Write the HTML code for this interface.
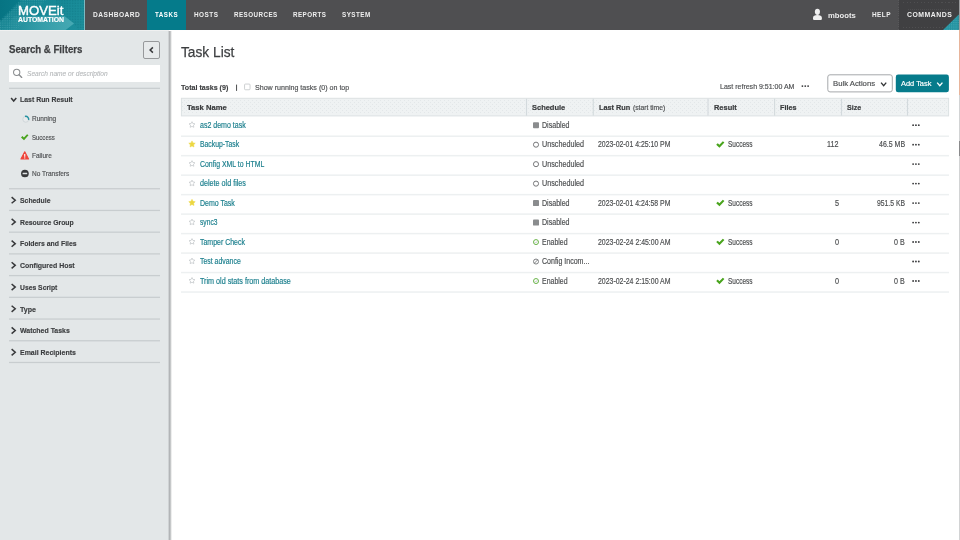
<!DOCTYPE html>
<html><head><meta charset="utf-8"><title>Task List - MOVEit Automation</title>
<style>
html,body{margin:0;padding:0;}
body{width:960px;height:540px;overflow:hidden;position:relative;background:#fff;font-family:"Liberation Sans",sans-serif;}
.t{position:absolute;white-space:nowrap;line-height:1;display:block;transform-origin:0 50%;}
.abs,.sep,.sdiv,.cdiv{position:absolute;}
#hdr{left:0;top:0;width:960px;height:30px;background:#4f4f51;}
#logo{left:0;top:0;width:84px;height:30px;background:linear-gradient(90deg,#067483 0%,#0b7f8e 40%,#178c99 100%);overflow:hidden;}
#tab{left:146.8px;top:0;width:39.2px;height:30px;background:#057b8b;}
#cmd{left:898.6px;top:0;width:61.4px;height:30px;background:#404042;}
#side{left:0;top:30px;width:169px;height:510px;background:#e3e7e8;}
#sideb{left:0;top:0;width:0;height:0;}
#sidesh{left:168.4px;top:30.6px;width:3.6px;height:510px;background:linear-gradient(90deg,#e3e7e8 0%,#b3b6b8 30%,#b0b3b5 50%,#dcdddd 75%,#ffffff 100%);}
#colbtn{left:143px;top:41px;width:15px;height:15.8px;border:1px solid #97999b;border-radius:2px;background:#e7eaeb;}
#srch{left:8.9px;top:64.7px;width:151.1px;height:17.8px;background:#fff;}
.sdiv{left:9px;width:151px;height:1.3px;background:#c3c8ca;}
#thead{left:180.9px;top:97.8px;width:768.2px;height:18.6px;background:#eef1f2;box-sizing:border-box;border:1px solid #d6dde0;}
.cdiv{top:98.6px;width:1px;height:17px;background:#d6dde0;}
.sep{left:181px;width:768px;height:1px;background:#e5eaec;}
#bulk{left:827.3px;top:74.4px;width:65.5px;height:18px;box-sizing:border-box;border:1px solid #a4a7a9;border-radius:2.5px;background:#fff;}
#add{left:895.8px;top:74.5px;width:53.1px;height:17.8px;border-radius:2.5px;background:#067b8b;}

</style></head><body>
<div id="hdr" class="abs"></div>
<div id="logo" class="abs">
<svg width="85" height="30" viewBox="0 0 85 30" style="position:absolute;left:0;top:0">
<defs>
<linearGradient id="lg1" x1="0" y1="0" x2="1" y2="0"><stop offset="0" stop-color="#3fa4af" stop-opacity="0"/><stop offset="0.55" stop-color="#3fa4af" stop-opacity="0.75"/><stop offset="1" stop-color="#46a9b3" stop-opacity="1"/></linearGradient>
<linearGradient id="lg2" x1="0" y1="1" x2="1" y2="0"><stop offset="0" stop-color="#2a96a2" stop-opacity="0.55"/><stop offset="1" stop-color="#2a96a2" stop-opacity="0.15"/></linearGradient>
<pattern id="ldots" width="1.8" height="1.8" patternUnits="userSpaceOnUse"><rect x="0" y="0" width="0.9" height="0.9" fill="#5fb3bd" opacity="0.4"/></pattern>
<pattern id="dots" width="1.6" height="1.6" patternUnits="userSpaceOnUse"><rect x="0" y="0" width="0.8" height="0.8" fill="#0a6f7d" opacity="0.45"/></pattern>
</defs>
<polygon points="0,30 0,22 22,0 60,0 85,0 85,30" fill="url(#lg2)"/>
<polygon points="56,0 85,0 85,30 78,30 74,23.4 64.7,16.3 56,8" fill="url(#dots)"/>
<polygon points="0,30 0,20 20,0 46,0 16,30" fill="url(#ldots)"/>
<polygon points="14,16.3 64.7,16.3 74,23.4 65.6,30 2,30" fill="url(#lg1)"/>
</svg></div>
<div class="abs" style="left:84px;top:0;width:1.2px;height:30px;background:#7ab9c1"></div>
<div id="tab" class="abs"></div>
<div id="cmd" class="abs"></div>
<div class="abs" style="left:897.6px;top:0;width:1px;height:30px;background:repeating-linear-gradient(180deg,#58585a 0 1px,#4a4a4c 1px 2.2px)"></div>
<div class="abs" style="left:903px;top:2px;width:53px;height:1px;background:repeating-linear-gradient(90deg,#4f4f51 0 1px,rgba(0,0,0,0) 1px 3.5px)"></div>
<div class="abs" style="left:903px;top:27px;width:42px;height:1px;background:repeating-linear-gradient(90deg,#4f4f51 0 1px,rgba(0,0,0,0) 1px 3px)"></div>
<div class="abs" style="left:908px;top:9px;width:43px;height:1px;background:repeating-linear-gradient(90deg,#4d4d4f 0 1px,rgba(0,0,0,0) 1px 2px)"></div>
<svg class="abs" style="left:942px;top:13px" width="18" height="17" viewBox="0 0 18 17"><defs><pattern id="dots2" width="1.8" height="1.8" patternUnits="userSpaceOnUse"><rect x="0" y="0" width="0.9" height="0.9" fill="#5fb6c0" opacity="0.55"/></pattern></defs><polygon points="1,17 16.8,1.4 16.8,17" fill="#2393a1"/><polygon points="1,17 16.8,1.4 16.8,17" fill="url(#dots2)"/></svg>
<div id="side" class="abs"></div>
<div class="abs" style="left:0;top:30px;width:169px;height:1px;background:#f0f1f1"></div>
<div id="sideb" class="abs"></div><div id="sidesh" class="abs"></div>
<div id="colbtn" class="abs"></div><div id="srch" class="abs"></div>
<svg class="abs" style="left:0;top:0" width="960" height="540" viewBox="0 0 960 540">
<rect x="9" y="87.7" width="151" height="1.25" fill="#c8cdcf"/>
<rect x="9" y="188.10" width="151" height="1.25" fill="#c8cdcf"/>
<rect x="9" y="209.82" width="151" height="1.25" fill="#c8cdcf"/>
<rect x="9" y="231.54" width="151" height="1.25" fill="#c8cdcf"/>
<rect x="9" y="253.26" width="151" height="1.25" fill="#c8cdcf"/>
<rect x="9" y="274.98" width="151" height="1.25" fill="#c8cdcf"/>
<rect x="9" y="296.70" width="151" height="1.25" fill="#c8cdcf"/>
<rect x="9" y="318.42" width="151" height="1.25" fill="#c8cdcf"/>
<rect x="9" y="340.14" width="151" height="1.25" fill="#c8cdcf"/>
<rect x="9" y="361.86" width="151" height="1.25" fill="#c8cdcf"/>
<rect x="181" y="135.45" width="768" height="1.5" fill="#edf0f1"/>
<rect x="181" y="154.93" width="768" height="1.5" fill="#edf0f1"/>
<rect x="181" y="174.41" width="768" height="1.5" fill="#edf0f1"/>
<rect x="181" y="193.89" width="768" height="1.5" fill="#edf0f1"/>
<rect x="181" y="213.37" width="768" height="1.5" fill="#edf0f1"/>
<rect x="181" y="232.85" width="768" height="1.5" fill="#edf0f1"/>
<rect x="181" y="252.33" width="768" height="1.5" fill="#edf0f1"/>
<rect x="181" y="271.81" width="768" height="1.5" fill="#edf0f1"/>
<rect x="181" y="291.29" width="768" height="1.5" fill="#edf0f1"/>
<defs><pattern id="hp" width="4" height="4" patternUnits="userSpaceOnUse"><rect x="0" y="0" width="1" height="1" fill="#e3e7e9"/><rect x="2" y="2" width="1" height="1" fill="#e3e7e9"/></pattern></defs>
<rect x="181.4" y="98.3" width="767.2" height="17.6" fill="#eff2f3" stroke="#dce1e3" stroke-width="1"/>
<rect x="182" y="100" width="766" height="14" fill="url(#hp)"/>
<rect x="525.95" y="98.7" width="1.1" height="16.9" fill="#d3dadd"/>
<rect x="592.70" y="98.7" width="1.1" height="16.9" fill="#d3dadd"/>
<rect x="707.45" y="98.7" width="1.1" height="16.9" fill="#d3dadd"/>
<rect x="774.05" y="98.7" width="1.1" height="16.9" fill="#d3dadd"/>
<rect x="840.95" y="98.7" width="1.1" height="16.9" fill="#d3dadd"/>
<rect x="906.95" y="98.7" width="1.1" height="16.9" fill="#d3dadd"/>
<ellipse cx="817.4" cy="11.8" rx="2.55" ry="3.1" fill="#efefef"/>
<path d="M813.8 19.9c-0.600 0-0.800-0.300-0.800-0.800v-1.300c0-1.900 1.700-2.700 4.400-2.700s4.500 0.800 4.500 2.700v1.300c0 0.500-0.200 0.800-0.800 0.800z" fill="#efefef"/>
<path d="M152.88 47.42L150.15 50.00L152.88 52.58" fill="none" stroke="#38393b" stroke-width="1.5"/>
<circle cx="16.7" cy="72.3" r="3.15" fill="none" stroke="#8a8d8f" stroke-width="1.05"/><path d="M19.1 74.800L21.700 77.400" stroke="#8a8d8f" stroke-width="1.35" stroke-linecap="round"/>
<path d="M11.12 98.03L13.70 101.05L16.28 98.03" fill="none" stroke="#38393b" stroke-width="1.5"/>
<circle cx="25.75" cy="119.3" r="2.95" fill="#e7eaeb" stroke="#d0d7da" stroke-width="1.0"/>
<path d="M24.99 116.45A2.95 2.95 0 0 1 28.60 120.06" fill="none" stroke="#2391a0" stroke-width="1.45"/>
<polygon points="21.00,137.43 22.43,136.03 23.93,137.56 27.07,134.20 28.50,135.36 24.00,140.30" fill="#49a41d"/>
<path d="M24.75 151.700L28.550 159.000H20.950z" fill="#ee453a" stroke="#ee453a" stroke-width="1.100" stroke-linejoin="round"/>
<rect x="24.2" y="154.000" width="1.1" height="2.800" fill="#fff"/><rect x="24.2" y="157.400" width="1.1" height="1.100" fill="#fff"/>
<circle cx="24.9" cy="173.5" r="3.85" fill="#38393b"/><rect x="22.600" y="172.700" width="4.600" height="1.600" rx="0.4" fill="#dfe3e4"/>
<path d="M11.62 197.12L15.25 200.20L11.62 203.27" fill="none" stroke="#38393b" stroke-width="1.5"/>
<path d="M11.62 218.84L15.25 221.92L11.62 224.99" fill="none" stroke="#38393b" stroke-width="1.5"/>
<path d="M11.62 240.56L15.25 243.64L11.62 246.71" fill="none" stroke="#38393b" stroke-width="1.5"/>
<path d="M11.62 262.28L15.25 265.36L11.62 268.44" fill="none" stroke="#38393b" stroke-width="1.5"/>
<path d="M11.62 284.00L15.25 287.08L11.62 290.16" fill="none" stroke="#38393b" stroke-width="1.5"/>
<path d="M11.62 305.72L15.25 308.80L11.62 311.88" fill="none" stroke="#38393b" stroke-width="1.5"/>
<path d="M11.62 327.44L15.25 330.52L11.62 333.60" fill="none" stroke="#38393b" stroke-width="1.5"/>
<path d="M11.62 349.16L15.25 352.24L11.62 355.32" fill="none" stroke="#38393b" stroke-width="1.5"/>
<rect x="244.55" y="84.05" width="5.5" height="5.7" rx="0.9" fill="#fff" stroke="#b9bdbf" stroke-width="0.7"/>
<rect x="236.1" y="84.6" width="0.95" height="6.3" fill="#444648"/>
<circle cx="802.40" cy="86.05" r="0.92" fill="#3a3b3d"/><circle cx="805.25" cy="86.05" r="0.92" fill="#3a3b3d"/><circle cx="808.10" cy="86.05" r="0.92" fill="#3a3b3d"/>
<rect x="827.8" y="74.8" width="64.5" height="17.1" rx="2.2" fill="#fff" stroke="#a6a9ab" stroke-width="1"/>
<rect x="895.8" y="74.6" width="53.1" height="17.6" rx="2.3" fill="#067b8b"/>
<path d="M881.07 82.67L883.65 85.62L886.23 82.67" fill="none" stroke="#333537" stroke-width="1.35"/>
<path d="M937.17 82.67L939.80 85.62L942.43 82.67" fill="none" stroke="#ffffff" stroke-width="1.35"/>
<polygon points="192.00,121.70 192.91,123.55 194.95,123.84 193.47,125.28 193.82,127.31 192.00,126.35 190.18,127.31 190.53,125.28 189.05,123.84 191.09,123.55" fill="none" stroke="#bfc3c5" stroke-width="0.7" stroke-linejoin="round"/>
<rect x="533.00" y="122.20" width="6" height="6" rx="0.9" fill="#8a8c8e"/>
<circle cx="913.10" cy="125.15" r="0.92" fill="#3a3b3d"/><circle cx="915.95" cy="125.15" r="0.92" fill="#3a3b3d"/><circle cx="918.80" cy="125.15" r="0.92" fill="#3a3b3d"/>
<polygon points="192.00,140.88 193.00,142.90 195.23,143.23 193.62,144.81 194.00,147.03 192.00,145.98 190.00,147.03 190.38,144.81 188.77,143.23 191.00,142.90" fill="#ecd741" stroke="#ecd741" stroke-width="0.5" stroke-linejoin="round"/>
<circle cx="536.00" cy="144.68" r="2.55" fill="none" stroke="#68696b" stroke-width="0.9"/>
<polygon points="716.20,144.72 717.76,143.23 719.40,144.85 722.84,141.28 724.40,142.51 719.48,147.78" fill="#49a41d"/>
<circle cx="913.10" cy="144.63" r="0.92" fill="#3a3b3d"/><circle cx="915.95" cy="144.63" r="0.92" fill="#3a3b3d"/><circle cx="918.80" cy="144.63" r="0.92" fill="#3a3b3d"/>
<polygon points="192.00,160.66 192.91,162.51 194.95,162.80 193.47,164.24 193.82,166.27 192.00,165.31 190.18,166.27 190.53,164.24 189.05,162.80 191.09,162.51" fill="none" stroke="#bfc3c5" stroke-width="0.7" stroke-linejoin="round"/>
<circle cx="536.00" cy="164.16" r="2.55" fill="none" stroke="#68696b" stroke-width="0.9"/>
<circle cx="913.10" cy="164.11" r="0.92" fill="#3a3b3d"/><circle cx="915.95" cy="164.11" r="0.92" fill="#3a3b3d"/><circle cx="918.80" cy="164.11" r="0.92" fill="#3a3b3d"/>
<polygon points="192.00,180.14 192.91,181.99 194.95,182.28 193.47,183.72 193.82,185.75 192.00,184.79 190.18,185.75 190.53,183.72 189.05,182.28 191.09,181.99" fill="none" stroke="#bfc3c5" stroke-width="0.7" stroke-linejoin="round"/>
<circle cx="536.00" cy="183.64" r="2.55" fill="none" stroke="#68696b" stroke-width="0.9"/>
<circle cx="913.10" cy="183.59" r="0.92" fill="#3a3b3d"/><circle cx="915.95" cy="183.59" r="0.92" fill="#3a3b3d"/><circle cx="918.80" cy="183.59" r="0.92" fill="#3a3b3d"/>
<polygon points="192.00,199.32 193.00,201.34 195.23,201.67 193.62,203.25 194.00,205.47 192.00,204.42 190.00,205.47 190.38,203.25 188.77,201.67 191.00,201.34" fill="#ecd741" stroke="#ecd741" stroke-width="0.5" stroke-linejoin="round"/>
<rect x="533.00" y="200.12" width="6" height="6" rx="0.9" fill="#8a8c8e"/>
<polygon points="716.20,203.16 717.76,201.67 719.40,203.29 722.84,199.72 724.40,200.95 719.48,206.22" fill="#49a41d"/>
<circle cx="913.10" cy="203.07" r="0.92" fill="#3a3b3d"/><circle cx="915.95" cy="203.07" r="0.92" fill="#3a3b3d"/><circle cx="918.80" cy="203.07" r="0.92" fill="#3a3b3d"/>
<polygon points="192.00,219.10 192.91,220.95 194.95,221.24 193.47,222.68 193.82,224.71 192.00,223.75 190.18,224.71 190.53,222.68 189.05,221.24 191.09,220.95" fill="none" stroke="#bfc3c5" stroke-width="0.7" stroke-linejoin="round"/>
<rect x="533.00" y="219.60" width="6" height="6" rx="0.9" fill="#8a8c8e"/>
<circle cx="913.10" cy="222.55" r="0.92" fill="#3a3b3d"/><circle cx="915.95" cy="222.55" r="0.92" fill="#3a3b3d"/><circle cx="918.80" cy="222.55" r="0.92" fill="#3a3b3d"/>
<polygon points="192.00,238.58 192.91,240.43 194.95,240.72 193.47,242.16 193.82,244.19 192.00,243.23 190.18,244.19 190.53,242.16 189.05,240.72 191.09,240.43" fill="none" stroke="#bfc3c5" stroke-width="0.7" stroke-linejoin="round"/>
<circle cx="536.00" cy="242.08" r="2.5" fill="none" stroke="#62b03f" stroke-width="0.95"/>
<path d="M534.80 242.18l0.9 0.9 1.5-1.8" fill="none" stroke="#a3a6a8" stroke-width="0.6"/>
<polygon points="716.20,242.12 717.76,240.63 719.40,242.25 722.84,238.68 724.40,239.91 719.48,245.18" fill="#49a41d"/>
<circle cx="913.10" cy="242.03" r="0.92" fill="#3a3b3d"/><circle cx="915.95" cy="242.03" r="0.92" fill="#3a3b3d"/><circle cx="918.80" cy="242.03" r="0.92" fill="#3a3b3d"/>
<polygon points="192.00,258.06 192.91,259.91 194.95,260.20 193.47,261.64 193.82,263.67 192.00,262.71 190.18,263.67 190.53,261.64 189.05,260.20 191.09,259.91" fill="none" stroke="#bfc3c5" stroke-width="0.7" stroke-linejoin="round"/>
<circle cx="536.00" cy="261.56" r="2.5" fill="none" stroke="#77797b" stroke-width="0.95"/>
<path d="M534.30 263.26L537.70 259.86" stroke="#77797b" stroke-width="0.9"/>
<circle cx="913.10" cy="261.51" r="0.92" fill="#3a3b3d"/><circle cx="915.95" cy="261.51" r="0.92" fill="#3a3b3d"/><circle cx="918.80" cy="261.51" r="0.92" fill="#3a3b3d"/>
<polygon points="192.00,277.54 192.91,279.39 194.95,279.68 193.47,281.12 193.82,283.15 192.00,282.19 190.18,283.15 190.53,281.12 189.05,279.68 191.09,279.39" fill="none" stroke="#bfc3c5" stroke-width="0.7" stroke-linejoin="round"/>
<circle cx="536.00" cy="281.04" r="2.5" fill="none" stroke="#62b03f" stroke-width="0.95"/>
<path d="M534.80 281.14l0.9 0.9 1.5-1.8" fill="none" stroke="#a3a6a8" stroke-width="0.6"/>
<polygon points="716.20,281.08 717.76,279.59 719.40,281.21 722.84,277.64 724.40,278.88 719.48,284.14" fill="#49a41d"/>
<circle cx="913.10" cy="280.99" r="0.92" fill="#3a3b3d"/><circle cx="915.95" cy="280.99" r="0.92" fill="#3a3b3d"/><circle cx="918.80" cy="280.99" r="0.92" fill="#3a3b3d"/>
</svg>
<div class="abs" style="left:958.8px;top:0;width:1.2px;height:30px;background:#9c9c9e"></div>
<div class="abs" style="left:958.8px;top:30px;width:1.2px;height:65px;background:#e8b49b"></div>
<div class="abs" style="left:958.8px;top:95px;width:1.2px;height:445px;background:#d2d3d4"></div>
<div class="abs" style="left:958.6px;top:141px;width:1.4px;height:14.5px;background:#8a8a8c"></div>
<div id="txt" style="position:absolute;left:0;top:0;width:960px;height:540px;will-change:transform">
<span class="t" style="left:92.80px;top:11px;font-size:7.6px;color:#efefef;font-weight:700;letter-spacing:0.55px;transform:scaleX(0.8714);">DASHBOARD</span>
<span class="t" style="left:155.40px;top:11px;font-size:7.6px;color:#ffffff;font-weight:700;letter-spacing:0.55px;transform:scaleX(0.8270);">TASKS</span>
<span class="t" style="left:194.10px;top:11px;font-size:7.6px;color:#efefef;font-weight:700;letter-spacing:0.55px;transform:scaleX(0.8441);">HOSTS</span>
<span class="t" style="left:234.10px;top:11px;font-size:7.6px;color:#efefef;font-weight:700;letter-spacing:0.55px;transform:scaleX(0.8236);">RESOURCES</span>
<span class="t" style="left:293.40px;top:11px;font-size:7.6px;color:#efefef;font-weight:700;letter-spacing:0.55px;transform:scaleX(0.8235);">REPORTS</span>
<span class="t" style="left:342.10px;top:11px;font-size:7.6px;color:#efefef;font-weight:700;letter-spacing:0.55px;transform:scaleX(0.8313);">SYSTEM</span>
<span class="t" style="left:871.80px;top:11px;font-size:7.6px;color:#efefef;font-weight:700;letter-spacing:0.55px;transform:scaleX(0.8469);">HELP</span>
<span class="t" style="left:906.80px;top:11px;font-size:7.6px;color:#efefef;font-weight:700;letter-spacing:0.55px;transform:scaleX(0.9076);">COMMANDS</span>
<span class="t" style="left:827.80px;top:12px;font-size:7.9px;color:#ececec;font-weight:700;transform:scaleX(0.9737);">mboots</span>
<span class="t" style="left:18.00px;top:5px;font-size:12.8px;color:#ffffff;-webkit-text-stroke:0.4px #ffffff;transform:scaleX(1.0285);">MOVEit</span>
<span class="t" style="left:18.40px;top:17px;font-size:6.3px;color:#ffffff;font-weight:700;-webkit-text-stroke:0.15px #ffffff;transform:scaleX(1.0916);">AUTOMATION</span>
<span class="t" style="left:9.00px;top:45px;font-size:10.3px;color:#3f4143;font-weight:700;-webkit-text-stroke:0.25px #3f4143;transform:scaleX(0.9355);">Search &amp; Filters</span>
<span class="t" style="left:26.50px;top:70px;font-size:7.5px;color:#b4b7b9;font-style:italic;-webkit-text-stroke:0.1px #b4b7b9;transform:scaleX(0.8793);">Search name or description</span>
<span class="t" style="left:20.40px;top:96px;font-size:7.6px;color:#3b3d3f;font-weight:700;-webkit-text-stroke:0.15px #3b3d3f;transform:scaleX(0.9107);">Last Run Result</span>
<span class="t" style="left:32.10px;top:115px;font-size:7.6px;color:#4e5052;-webkit-text-stroke:0.18px #4e5052;transform:scaleX(0.8570);">Running</span>
<span class="t" style="left:32.10px;top:134px;font-size:7.6px;color:#4e5052;-webkit-text-stroke:0.18px #4e5052;transform:scaleX(0.7926);">Success</span>
<span class="t" style="left:32.10px;top:152px;font-size:7.6px;color:#4e5052;-webkit-text-stroke:0.18px #4e5052;transform:scaleX(0.8506);">Failure</span>
<span class="t" style="left:32.10px;top:170px;font-size:7.6px;color:#4e5052;-webkit-text-stroke:0.18px #4e5052;transform:scaleX(0.8569);">No Transfers</span>
<span class="t" style="left:20.40px;top:197px;font-size:7.6px;color:#3b3d3f;font-weight:700;-webkit-text-stroke:0.15px #3b3d3f;transform:scaleX(0.9018);">Schedule</span>
<span class="t" style="left:20.40px;top:219px;font-size:7.6px;color:#3b3d3f;font-weight:700;-webkit-text-stroke:0.15px #3b3d3f;transform:scaleX(0.9034);">Resource Group</span>
<span class="t" style="left:20.40px;top:240px;font-size:7.6px;color:#3b3d3f;font-weight:700;-webkit-text-stroke:0.15px #3b3d3f;transform:scaleX(0.9071);">Folders and Files</span>
<span class="t" style="left:20.40px;top:262px;font-size:7.6px;color:#3b3d3f;font-weight:700;-webkit-text-stroke:0.15px #3b3d3f;transform:scaleX(0.9187);">Configured Host</span>
<span class="t" style="left:20.40px;top:284px;font-size:7.6px;color:#3b3d3f;font-weight:700;-webkit-text-stroke:0.15px #3b3d3f;transform:scaleX(0.8936);">Uses Script</span>
<span class="t" style="left:20.40px;top:306px;font-size:7.6px;color:#3b3d3f;font-weight:700;-webkit-text-stroke:0.15px #3b3d3f;transform:scaleX(0.9347);">Type</span>
<span class="t" style="left:20.40px;top:327px;font-size:7.6px;color:#3b3d3f;font-weight:700;-webkit-text-stroke:0.15px #3b3d3f;transform:scaleX(0.9155);">Watched Tasks</span>
<span class="t" style="left:20.40px;top:349px;font-size:7.6px;color:#3b3d3f;font-weight:700;-webkit-text-stroke:0.15px #3b3d3f;transform:scaleX(0.9189);">Email Recipients</span>
<span class="t" style="left:180.80px;top:44px;font-size:15.2px;color:#3c3e40;-webkit-text-stroke:0.25px #3c3e40;transform:scaleX(0.9028);">Task List</span>
<span class="t" style="left:181.10px;top:84px;font-size:8.0px;color:#3b3d3f;font-weight:700;-webkit-text-stroke:0.15px #3b3d3f;transform:scaleX(0.8881);">Total tasks (9)</span>
<span class="t" style="left:254.60px;top:84px;font-size:8.0px;color:#4e5052;-webkit-text-stroke:0.18px #4e5052;transform:scaleX(0.8868);">Show running tasks (0) on top</span>
<span class="t" style="left:719.70px;top:83px;font-size:8.0px;color:#4e5052;-webkit-text-stroke:0.18px #4e5052;transform:scaleX(0.8765);">Last refresh 9:51:00 AM</span>
<span class="t" style="left:833.30px;top:80px;font-size:7.8px;color:#4e5052;-webkit-text-stroke:0.18px #4e5052;transform:scaleX(0.9898);">Bulk Actions</span>
<span class="t" style="left:901.30px;top:80px;font-size:7.8px;color:#ffffff;-webkit-text-stroke:0.18px #ffffff;transform:scaleX(0.9534);">Add Task</span>
<span class="t" style="left:187.00px;top:104px;font-size:7.7px;color:#393b3d;font-weight:700;-webkit-text-stroke:0.2px #393b3d;transform:scaleX(0.9905);">Task Name</span>
<span class="t" style="left:532.10px;top:104px;font-size:7.7px;color:#393b3d;font-weight:700;-webkit-text-stroke:0.2px #393b3d;transform:scaleX(0.9726);">Schedule</span>
<span class="t" style="left:599.10px;top:104px;font-size:7.7px;color:#393b3d;font-weight:700;-webkit-text-stroke:0.2px #393b3d;transform:scaleX(0.9501);">Last Run</span>
<span class="t" style="left:713.90px;top:104px;font-size:7.7px;color:#393b3d;font-weight:700;-webkit-text-stroke:0.2px #393b3d;transform:scaleX(0.9681);">Result</span>
<span class="t" style="left:780.40px;top:104px;font-size:7.7px;color:#393b3d;font-weight:700;-webkit-text-stroke:0.2px #393b3d;transform:scaleX(0.9383);">Files</span>
<span class="t" style="left:846.90px;top:104px;font-size:7.7px;color:#393b3d;font-weight:700;-webkit-text-stroke:0.2px #393b3d;transform:scaleX(0.9259);">Size</span>
<span class="t" style="left:633.10px;top:105px;font-size:6.8px;color:#4e5052;-webkit-text-stroke:0.18px #4e5052;transform:scaleX(0.9928);">(start time)</span>
<span class="t" style="left:199.90px;top:122px;font-size:8.2px;color:#1b7f8d;-webkit-text-stroke:0.18px #1b7f8d;transform:scaleX(0.8592);">as2 demo task</span>
<span class="t" style="left:542.30px;top:122px;font-size:8.2px;color:#4e5052;-webkit-text-stroke:0.18px #4e5052;transform:scaleX(0.8647);">Disabled</span>
<span class="t" style="left:199.90px;top:141px;font-size:8.2px;color:#1b7f8d;-webkit-text-stroke:0.18px #1b7f8d;transform:scaleX(0.8352);">Backup-Task</span>
<span class="t" style="left:542.30px;top:141px;font-size:8.2px;color:#4e5052;-webkit-text-stroke:0.18px #4e5052;transform:scaleX(0.8798);">Unscheduled</span>
<span class="t" style="left:598.40px;top:141px;font-size:8.2px;color:#4e5052;-webkit-text-stroke:0.18px #4e5052;transform:scaleX(0.8421);">2023-02-01 4:25:10 PM</span>
<span class="t" style="left:727.60px;top:141px;font-size:8.2px;color:#4e5052;-webkit-text-stroke:0.18px #4e5052;transform:scaleX(0.7931);">Success</span>
<span class="t" style="left:827.10px;top:141px;font-size:8.2px;color:#4e5052;-webkit-text-stroke:0.18px #4e5052;transform:scaleX(0.8766);">112</span>
<span class="t" style="left:878.60px;top:141px;font-size:8.2px;color:#4e5052;-webkit-text-stroke:0.18px #4e5052;transform:scaleX(0.8574);">46.5 MB</span>
<span class="t" style="left:199.90px;top:161px;font-size:8.2px;color:#1b7f8d;-webkit-text-stroke:0.18px #1b7f8d;transform:scaleX(0.8438);">Config XML to HTML</span>
<span class="t" style="left:542.30px;top:161px;font-size:8.2px;color:#4e5052;-webkit-text-stroke:0.18px #4e5052;transform:scaleX(0.8798);">Unscheduled</span>
<span class="t" style="left:199.90px;top:180px;font-size:8.2px;color:#1b7f8d;-webkit-text-stroke:0.18px #1b7f8d;transform:scaleX(0.8779);">delete old files</span>
<span class="t" style="left:542.30px;top:180px;font-size:8.2px;color:#4e5052;-webkit-text-stroke:0.18px #4e5052;transform:scaleX(0.8798);">Unscheduled</span>
<span class="t" style="left:199.90px;top:200px;font-size:8.2px;color:#1b7f8d;-webkit-text-stroke:0.18px #1b7f8d;transform:scaleX(0.8539);">Demo Task</span>
<span class="t" style="left:542.30px;top:200px;font-size:8.2px;color:#4e5052;-webkit-text-stroke:0.18px #4e5052;transform:scaleX(0.8647);">Disabled</span>
<span class="t" style="left:598.40px;top:200px;font-size:8.2px;color:#4e5052;-webkit-text-stroke:0.18px #4e5052;transform:scaleX(0.8421);">2023-02-01 4:24:58 PM</span>
<span class="t" style="left:727.60px;top:200px;font-size:8.2px;color:#4e5052;-webkit-text-stroke:0.18px #4e5052;transform:scaleX(0.7931);">Success</span>
<span class="t" style="left:834.50px;top:200px;font-size:8.2px;color:#4e5052;-webkit-text-stroke:0.18px #4e5052;transform:scaleX(0.8877);">5</span>
<span class="t" style="left:876.80px;top:200px;font-size:8.2px;color:#4e5052;-webkit-text-stroke:0.18px #4e5052;transform:scaleX(0.8297);">951.5 KB</span>
<span class="t" style="left:199.90px;top:219px;font-size:8.2px;color:#1b7f8d;-webkit-text-stroke:0.18px #1b7f8d;transform:scaleX(0.8158);">sync3</span>
<span class="t" style="left:542.30px;top:219px;font-size:8.2px;color:#4e5052;-webkit-text-stroke:0.18px #4e5052;transform:scaleX(0.8647);">Disabled</span>
<span class="t" style="left:199.90px;top:239px;font-size:8.2px;color:#1b7f8d;-webkit-text-stroke:0.18px #1b7f8d;transform:scaleX(0.8514);">Tamper Check</span>
<span class="t" style="left:542.30px;top:239px;font-size:8.2px;color:#4e5052;-webkit-text-stroke:0.18px #4e5052;transform:scaleX(0.8499);">Enabled</span>
<span class="t" style="left:598.40px;top:239px;font-size:8.2px;color:#4e5052;-webkit-text-stroke:0.18px #4e5052;transform:scaleX(0.8466);">2023-02-24 2:45:00 AM</span>
<span class="t" style="left:727.60px;top:239px;font-size:8.2px;color:#4e5052;-webkit-text-stroke:0.18px #4e5052;transform:scaleX(0.7931);">Success</span>
<span class="t" style="left:834.50px;top:239px;font-size:8.2px;color:#4e5052;-webkit-text-stroke:0.18px #4e5052;transform:scaleX(0.8877);">0</span>
<span class="t" style="left:894.10px;top:239px;font-size:8.2px;color:#4e5052;-webkit-text-stroke:0.18px #4e5052;transform:scaleX(0.8661);">0 B</span>
<span class="t" style="left:199.90px;top:258px;font-size:8.2px;color:#1b7f8d;-webkit-text-stroke:0.18px #1b7f8d;transform:scaleX(0.8446);">Test advance</span>
<span class="t" style="left:542.30px;top:258px;font-size:8.2px;color:#4e5052;-webkit-text-stroke:0.18px #4e5052;transform:scaleX(0.8599);">Config Incom...</span>
<span class="t" style="left:199.90px;top:278px;font-size:8.2px;color:#1b7f8d;-webkit-text-stroke:0.18px #1b7f8d;transform:scaleX(0.8782);">Trim old stats from database</span>
<span class="t" style="left:542.30px;top:278px;font-size:8.2px;color:#4e5052;-webkit-text-stroke:0.18px #4e5052;transform:scaleX(0.8499);">Enabled</span>
<span class="t" style="left:598.40px;top:278px;font-size:8.2px;color:#4e5052;-webkit-text-stroke:0.18px #4e5052;transform:scaleX(0.8466);">2023-02-24 2:15:00 AM</span>
<span class="t" style="left:727.60px;top:278px;font-size:8.2px;color:#4e5052;-webkit-text-stroke:0.18px #4e5052;transform:scaleX(0.7931);">Success</span>
<span class="t" style="left:834.50px;top:278px;font-size:8.2px;color:#4e5052;-webkit-text-stroke:0.18px #4e5052;transform:scaleX(0.8877);">0</span>
<span class="t" style="left:894.10px;top:278px;font-size:8.2px;color:#4e5052;-webkit-text-stroke:0.18px #4e5052;transform:scaleX(0.8661);">0 B</span>
</div></body></html>
